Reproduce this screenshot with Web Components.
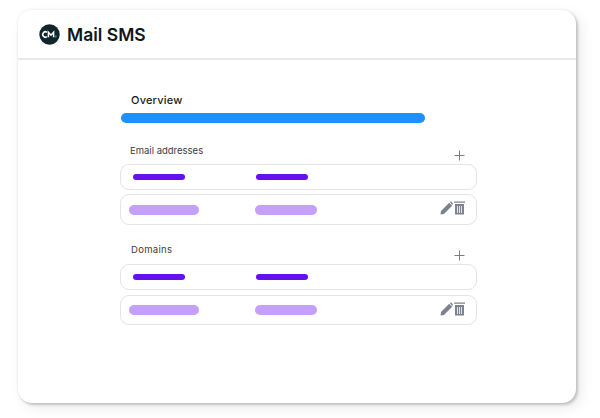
<!DOCTYPE html>
<html>
<head>
<meta charset="utf-8">
<style>
html, body { margin: 0; background: #fff; }
body { width: 600px; height: 418px; overflow: hidden; font-family: "Inter", "Liberation Sans", sans-serif; }
</style>
</head>
<body>
<template id="app-window">
  <style>
    :host { display: block; box-sizing: border-box; width: 558px; height: 393px; margin: 10px 0 0 18px;
      background: #fff; border-radius: 14px; box-shadow: 2px 2px 3px rgba(0,0,0,.18), 0 0 3px rgba(0,0,0,.09), 5px 5px 14px rgba(0,0,0,.08); }
    header { display: flex; align-items: center; gap: 7px; padding: 1px 0 0 21px; box-sizing: border-box;
      border-bottom: 2px solid #e9e9e9; height: 50px; font-size: 17.5px; font-weight: 600; color: #10181c; }
    main { display: block; padding: 32px 0 0 102px; width: 357px; }
  </style>
  <header><slot name="logo"></slot><slot name="title"></slot></header>
  <main><slot></slot></main>
</template>

<template id="overview-bar">
  <style>
    :host { display: block; margin-bottom: 18px; }
    div { font-size: 11px; font-weight: 500; letter-spacing: .2px; color: #1a1a1a; padding-left: 11px; line-height: 16px; margin-bottom: 5px; }
    i { display: block; width: 304px; height: 10px; margin-left: 1px; border-radius: 5px; background: #1e90ff; }
  </style>
  <div><slot></slot></div><i></i>
</template>

<template id="list-section">
  <style>
    :host { display: block; margin-bottom: 16px; }
    .head { display: flex; justify-content: space-between; height: 23px; padding: 0 12px 0 10px; }
    .label { font-size: 9.5px; color: #3c3c3c; line-height: 14px; padding-top: 3px; }
    svg { margin-top: 9px; }
    .rows { display: flex; flex-direction: column; gap: 4px; }
  </style>
  <div class="head"><span class="label"><slot name="label"></slot></span>
    <svg width="11" height="11" viewBox="0 0 11 11"><path d="M5.5 .5v10M.5 5.5h10" stroke="#767c88" stroke-width="1" fill="none"/></svg></div>
  <div class="rows"><slot></slot></div>
</template>

<template id="data-row">
  <style>
    :host { display: flex; align-items: center; box-sizing: border-box; height: 26px; width: 357px; padding-left: 12px;
      border: 1px solid #e4e4e4; border-radius: 9px; background: #fff; }
    :host([light]) { height: 31px; padding-left: 8px; }
    i { display: block; width: 52px; height: 6px; border-radius: 3px; background: #6610f2; margin-right: 71px; }
    :host([light]) i { width: 70px; height: 10px; border-radius: 5px; background: #c4a0fb; margin-right: 56px; }
    :host([light]) i + i { width: 62px; margin-right: 0; }
    .tools { display: flex; align-items: center; margin-left: auto; margin-right: 11px; margin-top: -3px; }
  </style>
  <i></i><i></i>
  <span class="tools"><slot></slot></span>
</template>

<template id="row-tools">
  <style>:host { display: flex; gap: 1px; } svg { display: block; }</style>
  <svg width="13" height="14" viewBox="0 0 13 14"><path d="M.5 13.5 1 10 9.2 1.8l3 3L4 13z M10 1l1-.8 2 2-.8 1.8z" fill="#7c8290"/></svg>
  <svg width="11" height="14" viewBox="0 0 11 14"><path d="M0 .5h11v1.2H0zM1 3h9v10.5H1z" fill="#7c8290"/><path d="M3.5 5v7M5.5 5v7M7.5 5v7" stroke="#fff" stroke-width=".8"/></svg>
</template>

<app-window>
  <svg slot="logo" width="21" height="21" viewBox="0 0 21 21"><circle cx="10.5" cy="10.5" r="10.2" fill="#10262a"/>
    <path d="M8 8.3a2.7 2.7 0 1 0 0 4.4" stroke="#fff" stroke-width="1.6" fill="none"/>
    <path d="M9.4 13.2V8.2l2.6 3 2.6-3v5" stroke="#fff" stroke-width="1.5" fill="none"/>
    <circle cx="16.7" cy="12.6" r="1" fill="#1e90ff"/></svg>
  <span slot="title">Mail SMS</span>
  <overview-bar>Overview</overview-bar>
  <list-section><span slot="label">Email addresses</span>
    <data-row></data-row>
    <data-row light><row-tools></row-tools></data-row>
  </list-section>
  <list-section><span slot="label" style="margin:-1px 0 0 1px;display:block;letter-spacing:.3px">Domains</span>
    <data-row></data-row>
    <data-row light style="margin-top:1px;height:30px"><row-tools></row-tools></data-row>
  </list-section>
</app-window>

<script>
  // every element here is only a template clone
  for (const name of ['app-window', 'overview-bar', 'list-section', 'data-row', 'row-tools']) {
    customElements.define(name, class extends HTMLElement {
      constructor() {
        super();
        this.attachShadow({ mode: 'open' }).appendChild(
          document.getElementById(name).content.cloneNode(true)
        );
      }
    });
  }
</script>
</body>
</html>
